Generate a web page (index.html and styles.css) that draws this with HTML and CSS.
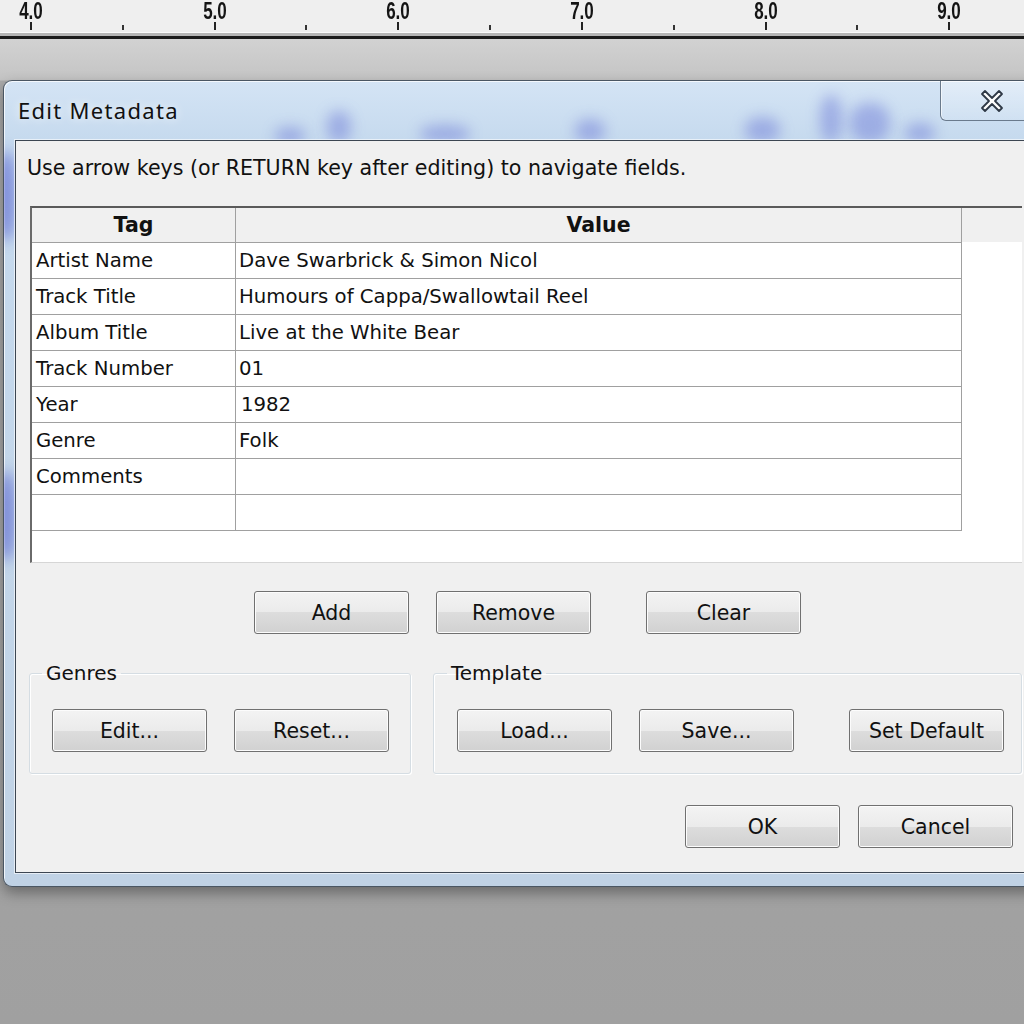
FILE: index.html
```html
<!DOCTYPE html>
<html lang="en">
<head>
  <meta charset="UTF-8" />
  <title>Edit Metadata</title>
  <link rel="stylesheet" href="styles.css">
</head>
<body>
  <div class="ruler">
    <div class="ruler-cell"><span class="ruler-label">4.0</span></div>
    <div class="ruler-cell"><span class="ruler-label">5.0</span></div>
    <div class="ruler-cell"><span class="ruler-label">6.0</span></div>
    <div class="ruler-cell"><span class="ruler-label">7.0</span></div>
    <div class="ruler-cell"><span class="ruler-label">8.0</span></div>
    <div class="ruler-cell"><span class="ruler-label">9.0</span></div>
  </div>
  <div class="track-edge"></div>

  <div class="backdrop">
    <div class="window">
      <!-- waveform showing through the glass frame -->
      <span class="blob blob-1"></span>
      <span class="blob blob-2"></span>
      <span class="blob blob-3"></span>
      <span class="blob blob-4"></span>
      <span class="blob blob-5"></span>
      <span class="blob blob-6"></span>
      <span class="blob blob-7"></span>
      <span class="blob blob-8"></span>
      <span class="blob blob-9"></span>
      <span class="blob blob-10"></span>

      <div class="titlebar">
        <span class="title">Edit Metadata</span>
        <button class="close-btn" title="Close">
          <svg width="28" height="26" viewBox="0 0 28 26">
            <polygon points="4,6 7,3 14,10 21,3 24,6 17,13 24,20 21,23 14,16 7,23 4,20 11,13"
                     fill="#fdfdfd" stroke="#2f3946" stroke-width="1.8" stroke-linejoin="round"/>
          </svg>
        </button>
      </div>

      <div class="client">
        <p class="hint">Use arrow keys (or RETURN key after editing) to navigate fields.</p>

        <div class="grid">
          <table class="tags">
            <colgroup><col class="col-tag"><col class="col-value"></colgroup>
            <thead>
              <tr><th>Tag</th><th>Value</th></tr>
            </thead>
            <tbody>
              <tr><td>Artist Name</td><td>Dave Swarbrick &amp; Simon Nicol</td></tr>
              <tr><td>Track Title</td><td>Humours of Cappa/Swallowtail Reel</td></tr>
              <tr><td>Album Title</td><td>Live at the White Bear</td></tr>
              <tr><td>Track Number</td><td>01</td></tr>
              <tr><td>Year</td><td class="year">1982</td></tr>
              <tr><td>Genre</td><td>Folk</td></tr>
              <tr><td>Comments</td><td>&nbsp;</td></tr>
              <tr><td>&nbsp;</td><td>&nbsp;</td></tr>
            </tbody>
          </table>
        </div>

        <div class="btn-row edit-row">
          <button class="btn">Add</button>
          <button class="btn">Remove</button>
          <button class="btn btn-far">Clear</button>
        </div>

        <div class="groups">
          <fieldset class="group genres">
            <legend>Genres</legend>
            <div class="btn-row">
              <button class="btn">Edit...</button>
              <button class="btn">Reset...</button>
            </div>
          </fieldset>
          <fieldset class="group template">
            <legend>Template</legend>
            <div class="btn-row">
              <button class="btn">Load...</button>
              <button class="btn">Save...</button>
              <button class="btn btn-far">Set Default</button>
            </div>
          </fieldset>
        </div>

        <div class="btn-row footer">
          <button class="btn">OK</button>
          <button class="btn">Cancel</button>
        </div>
      </div>
    </div>
  </div>
</body>
</html>
```

FILE: styles.css
```css
* {
  box-sizing: border-box;
}
body {
  margin: 0;
  width: 1024px;
  height: 1024px;
  overflow: hidden;
  background: #a0a0a0;
  font-family: "DejaVu Sans", sans-serif;
  color: #111;
}

/* timeline ruler behind the dialog */
.ruler {
  display: flex;
  height: 33px;
  background: #efefef;
  border-bottom: 1px solid #fbfbfb;
}
.ruler-cell {
  flex: none;
  width: 183.7px;
  position: relative;
  text-align: center;
}
.ruler-cell:first-child {
  margin-left: -61px;
}
.ruler-label {
  display: inline-block;
  font-family: "Liberation Sans", sans-serif;
  font-weight: bold;
  font-size: 23px;
  line-height: 22px;
  margin-top: 0;
  transform: scaleX(.74);
  color: #151515;
}
.ruler-cell::before {
  content: "";
  position: absolute;
  left: 50%;
  bottom: 2px;
  width: 2px;
  height: 8px;
  margin-left: -1px;
  background: #222;
}
.ruler-cell::after {
  content: "";
  position: absolute;
  right: -1px;
  bottom: 2px;
  width: 2px;
  height: 5px;
  background: #333;
}
.track-edge {
  height: 6px;
  background: linear-gradient(#b6b6b6 0 3px, #1c1c1c 3px 6px);
}
.backdrop {
  height: 985px;
  padding: 41px 0 0 3px;
  background: linear-gradient(#d2d2d2, #c4c4c4 41px, #a9a9a9 42px, #a0a0a0);
}

/* dialog frame */
.window {
  position: relative;
  width: 1060px;
  border: 1px solid #4a5663;
  border-right: none;
  border-radius: 9px 0 0 9px;
  padding: 0 0 13px 11px;
  background: linear-gradient(#d4e4f5, #c6daee 58px, #c0d2e5);
  box-shadow: 0 6px 14px rgba(0, 0, 0, .35), inset 1px 1px 0 rgba(255, 255, 255, .75);
  overflow: hidden;
}
.blob {
  position: absolute;
  border-radius: 45%;
  background: rgba(75, 85, 205, .35);
  filter: blur(7px);
}
.blob-1 { left: 271px; top: 46px; width: 30px; height: 18px; }
.blob-2 { left: 323px; top: 30px; width: 24px; height: 32px; }
.blob-3 { left: 416px; top: 44px; width: 50px; height: 18px; }
.blob-4 { left: 571px; top: 38px; width: 30px; height: 24px; }
.blob-5 { left: 741px; top: 36px; width: 35px; height: 26px; }
.blob-6 { left: 816px; top: 14px; width: 22px; height: 48px; }
.blob-7 { left: 846px; top: 22px; width: 40px; height: 40px; }
.blob-8 { left: 901px; top: 42px; width: 30px; height: 20px; }
.blob-9 { left: -8px; top: 70px; width: 20px; height: 90px; background: rgba(55, 65, 200, .5); }
.blob-10 { left: -8px; top: 390px; width: 20px; height: 90px; background: rgba(55, 65, 200, .5); }

.titlebar {
  position: relative;
  z-index: 1;
  height: 59px;
  padding: 15px 0 0 3px;
}
.title {
  font-family: "Noto Sans", sans-serif;
  font-size: 22px;
  line-height: 28px;
  letter-spacing: 1.3px;
  color: #111;
  text-shadow: 0 0 10px rgba(255, 255, 255, .9);
}
.close-btn {
  position: absolute;
  left: 925px;
  top: -1px;
  width: 110px;
  height: 41px;
  padding: 0 0 0 37px;
  border: 1px solid #6a7a8c;
  border-top: none;
  border-radius: 0 0 0 6px;
  background: linear-gradient(rgba(255, 255, 255, .35), rgba(255, 255, 255, .1));
  box-shadow: inset 1px 0 0 rgba(255, 255, 255, .6);
  text-align: left;
}
.close-btn svg {
  display: block;
  margin-top: 1px;
}

/* dialog body */
.client {
  position: relative;
  z-index: 1;
  height: 733px;
  background: #f0f0f0;
  border: 1px solid #3c4652;
  border-right: none;
  box-shadow: 0 0 0 1px rgba(255, 255, 255, .6);
}
.hint {
  margin: 15px 0 0 11px;
  font-size: 20.6px;
  line-height: 24px;
}
.grid {
  margin: 26px 0 0 14px;
  width: 992px;
  height: 357px;
  border-top: 2px solid #5a5a5a;
  border-left: 2px solid #6a6a6a;
  border-bottom: 1px solid #d6d6d6;
  background: linear-gradient(#f0f0f0 0 34px, #fff 34px);
}
.tags {
  border-collapse: separate;
  border-spacing: 0;
  table-layout: fixed;
  width: 930px;
  font-size: 19.7px;
}
.col-tag {
  width: 204px;
}
.col-value {
  width: 726px;
}
.tags th,
.tags td {
  padding: 0 0 0 4px;
  border-right: 1px solid #a0a0a0;
  border-bottom: 1px solid #a0a0a0;
  white-space: nowrap;
  overflow: hidden;
  text-align: left;
}
.tags td {
  line-height: 35px;
}
.tags td + td {
  padding-left: 3px;
}
.tags td.year {
  padding-left: 5px;
}
.tags th {
  line-height: 34px;
  font-size: 20.5px;
  text-align: center;
  padding: 0;
}

.btn-row {
  display: flex;
  gap: 27px;
}
.btn {
  flex: none;
  width: 155px;
  height: 43px;
  padding: 0;
  border: 1px solid #707070;
  border-radius: 3px;
  background: linear-gradient(#f3f3f3, #ebebeb 50%, #dddddd 50%, #d1d1d1);
  box-shadow: inset 0 0 0 1px #fcfcfc;
  font-family: "DejaVu Sans", sans-serif;
  font-size: 20.5px;
  color: #111;
}
.btn-far {
  margin-left: 28px;
}
.edit-row {
  margin: 28px 0 0 238px;
}
.groups {
  display: flex;
  gap: 22px;
  margin: 27px 0 0 13px;
}
.group {
  margin: 0;
  height: 113px;
  padding: 24px 0 0 22px;
  border: 1px solid #d5dde3;
  border-radius: 3px;
  box-shadow: inset 1px 1px 0 #fff, 1px 1px 0 #fff;
}
.group legend {
  margin-left: -10px;
  padding: 0 4px;
  font-size: 20px;
  line-height: 24px;
}
.genres {
  width: 382px;
}
.template {
  width: 589px;
  padding-left: 23px;
}
.footer {
  gap: 18px;
  margin: 31px 0 0 669px;
}
```
